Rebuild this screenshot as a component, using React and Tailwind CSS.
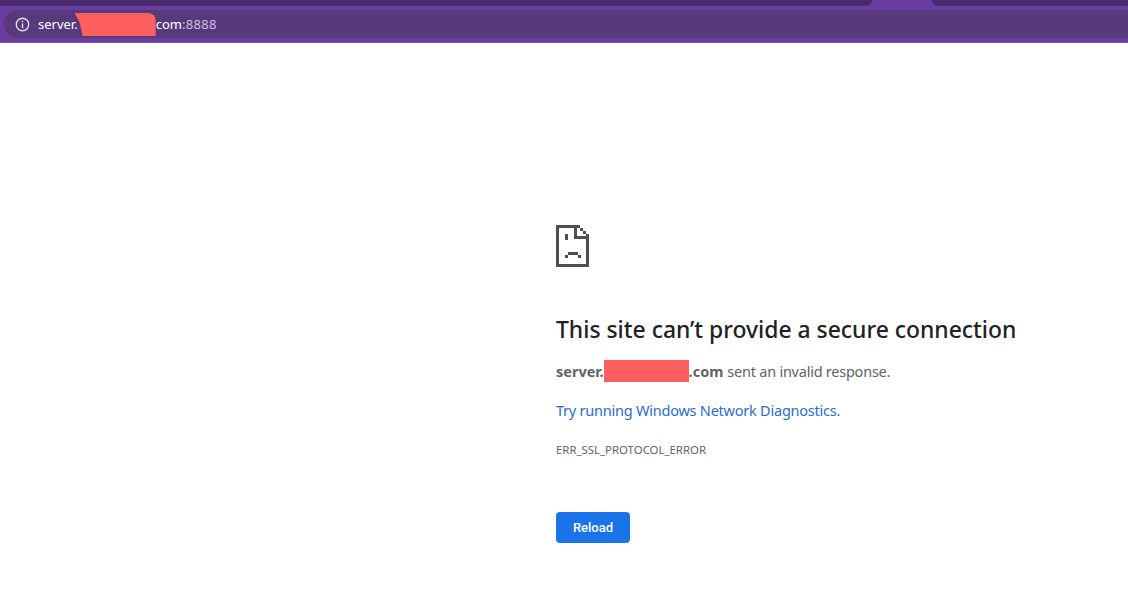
export default function App() {
  return (
    <div className="w-[1128px] h-[608px] bg-white overflow-hidden flex flex-col font-['Noto_Sans',sans-serif]">
      <header className="h-[43px] bg-[#6a3ea1] flex flex-col shrink-0 border-b border-[#7e57ac]">
        <div className="h-[6px] flex shrink-0">
          <div className="w-[872px] bg-[#482b6e] rounded-br-[6px]" />
          <div className="w-[60px]" />
          <div className="flex-1 bg-[#482b6e] rounded-bl-[6px]" />
        </div>
        <div className="h-[28px] mt-[4px] ml-[4px] bg-[#573a7c] rounded-l-[14px] flex items-center">
          <svg className="w-[15px] h-[15px] ml-[11px] shrink-0" viewBox="0 0 15 15" fill="none" stroke="#e6dff0" strokeWidth="1.4">
            <circle cx="7.5" cy="7.5" r="6.2" />
            <path d="M7.5 6.4V11.2M7.5 3.8V5.2" />
          </svg>
          <div className="ml-[8px] text-[13px] leading-[28px] text-white flex items-center">
            <span>server.</span>
            <span className="w-[81px] h-[23px] ml-[-3px] mt-[1px] bg-[#ff5f5f] rounded-tr-[8px] blur-[0.7px] [clip-path:polygon(0_0,100%_0,100%_100%,10%_100%,6%_40%)]" />
            <span>com</span>
            <span className="text-[#cdbfe0] tracking-[0.3px]">:8888</span>
          </div>
        </div>
      </header>
      <main className="pl-[556px] pt-[182px] flex flex-col items-start">
        <svg className="w-[33px] h-[42px] shrink-0" viewBox="0 0 33 42" fill="#4f4f4f" shapeRendering="crispEdges">
          <path d="M0 0H21V3H3V39H30V14H18V0H21V11H33V42H0Z" />
          <path d="M21 0H24V3H21ZM24 3H27V6H24ZM27 6H30V9H27ZM30 9H33V11H30Z" />
          <path d="M9 9H12V15H9Z" />
          <path d="M9 30H12V33H9ZM12 27H22V30H12ZM22 30H25V33H22Z" />
        </svg>
        <h1 className="mt-[48px] text-[22.9px] leading-[30px] font-medium text-[#202124] whitespace-nowrap">This site can’t provide a secure connection</h1>
        <p className="mt-[15px] text-[14.5px] leading-[22px] text-[#5f6368] flex items-center whitespace-nowrap tracking-[-0.24px]">
          <b className="font-bold tracking-normal">server.</b>
          <span className="w-[85px] h-[22px] bg-[#ff5f5f] blur-[0.5px]" />
          <b className="font-bold tracking-normal">.com</b>
          <span className="ml-[4px]">sent an invalid response.</span>
        </p>
        <p className="mt-[17px] text-[14.5px] leading-[22px] text-[#5f6368] whitespace-nowrap tracking-[-0.23px]">
          <a className="text-[#2d6cc9]">Try running Windows Network Diagnostics</a>.
        </p>
        <p className="mt-[21px] text-[11.4px] leading-[16px] text-[#5f6368] whitespace-nowrap">ERR_SSL_PROTOCOL_ERROR</p>
        <button className="mt-[54px] w-[74px] h-[31px] rounded-[4px] bg-[#1a73e8] text-white text-[13px] font-medium font-['Roboto',sans-serif]">Reload</button>
      </main>
    </div>
  );
}
